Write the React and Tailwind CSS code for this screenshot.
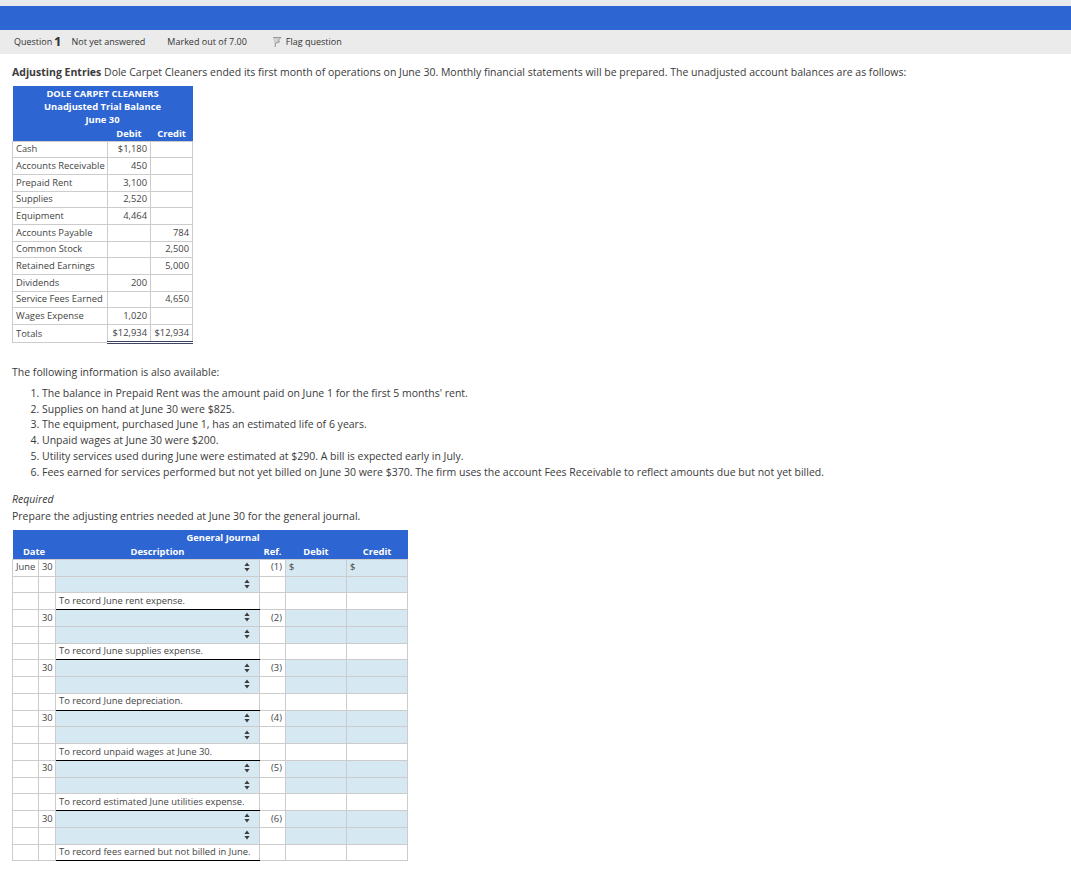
const trialRows = [
  ['Cash', '$1,180', ''],
  ['Accounts Receivable', '450', ''],
  ['Prepaid Rent', '3,100', ''],
  ['Supplies', '2,520', ''],
  ['Equipment', '4,464', ''],
  ['Accounts Payable', '', '784'],
  ['Common Stock', '', '2,500'],
  ['Retained Earnings', '', '5,000'],
  ['Dividends', '200', ''],
  ['Service Fees Earned', '', '4,650'],
  ['Wages Expense', '1,020', ''],
]

const info = [
  "The balance in Prepaid Rent was the amount paid on June 1 for the first 5 months' rent.",
  'Supplies on hand at June 30 were $825.',
  'The equipment, purchased June 1, has an estimated life of 6 years.',
  'Unpaid wages at June 30 were $200.',
  'Utility services used during June were estimated at $290. A bill is expected early in July.',
  'Fees earned for services performed but not yet billed on June 30 were $370. The firm uses the account Fees Receivable to reflect amounts due but not yet billed.',
]

const entries = [
  'To record June rent expense.',
  'To record June supplies expense.',
  'To record June depreciation.',
  'To record unpaid wages at June 30.',
  'To record estimated June utilities expense.',
  'To record fees earned but not billed in June.',
]

const cell = 'border border-[#cccccc] px-[3px] pt-0 pb-[1px] leading-none whitespace-nowrap overflow-hidden'
const input = 'bg-[#d6e8f1]'

function SelectArrows() {
  return (
    <svg width="6" height="10" viewBox="0 0 6 10" className="ml-auto mr-[6px] shrink-0">
      <path d="M3 0.5 L5.6 4 H0.4 Z M3 9.5 L5.6 6 H0.4 Z" fill="#3c3c3c" />
    </svg>
  )
}

function TrialBalance() {
  return (
    <table className="w-[180px] table-fixed border-collapse text-[9.4px] text-[#444]">
      <colgroup>
        <col className="w-[95px]" />
        <col className="w-[43px]" />
        <col className="w-[42px]" />
      </colgroup>
      <thead className="bg-[#2d65d3] text-white font-bold text-center">
        <tr className="h-[14px]"><th colSpan={3} className="p-0 pt-[2px] font-bold leading-none">DOLE CARPET CLEANERS</th></tr>
        <tr className="h-[13px]"><th colSpan={3} className="p-0 font-bold leading-none">Unadjusted Trial Balance</th></tr>
        <tr className="h-[13px]"><th colSpan={3} className="p-0 font-bold leading-none">June 30</th></tr>
        <tr className="h-[15px]">
          <th></th>
          <th className="p-0 font-bold leading-none">Debit</th>
          <th className="p-0 font-bold leading-none">Credit</th>
        </tr>
      </thead>
      <tbody>
        {trialRows.map(([name, debit, credit]) => (
          <tr key={name} className="h-[16.7px]">
            <td className={cell}>{name}</td>
            <td className={`${cell} text-right`}>{debit}</td>
            <td className={`${cell} text-right`}>{credit}</td>
          </tr>
        ))}
        <tr className="h-[18px]">
          <td className={`${cell} pt-[1px]`}>Totals</td>
          <td className={`${cell} text-right border-t-black border-b-[3px] border-b-[#3d4560] [border-bottom-style:double]`}>$12,934</td>
          <td className={`${cell} text-right border-t-black border-b-[3px] border-b-[#3d4560] [border-bottom-style:double]`}>$12,934</td>
        </tr>
      </tbody>
    </table>
  )
}

function JournalEntry({ index, text }) {
  return (
    <>
      <tr className="h-[16.75px]">
        <td className={cell}>{index === 0 ? 'June' : ''}</td>
        <td className={`${cell} text-right`}>30</td>
        <td className={`${cell} ${input}`}>
          <div className="flex items-center"><SelectArrows /></div>
        </td>
        <td className={`${cell} text-right`}>({index + 1})</td>
        <td className={`${cell} ${input}`}>{index === 0 ? '$' : ''}</td>
        <td className={`${cell} ${input}`}>{index === 0 ? '$' : ''}</td>
      </tr>
      <tr className="h-[16.75px]">
        <td className={cell}></td>
        <td className={cell}></td>
        <td className={`${cell} ${input}`}>
          <div className="flex items-center"><SelectArrows /></div>
        </td>
        <td className={cell}></td>
        <td className={`${cell} ${input}`}></td>
        <td className={`${cell} ${input}`}></td>
      </tr>
      <tr className="h-[16.75px]">
        <td className={cell}></td>
        <td className={cell}></td>
        <td className={`${cell} border-b-black`}>{text}</td>
        <td className={cell}></td>
        <td className={cell}></td>
        <td className={cell}></td>
      </tr>
    </>
  )
}

function GeneralJournal() {
  return (
    <table className="w-[395px] table-fixed border-collapse text-[9.4px] text-[#444]">
      <colgroup>
        <col className="w-[26px]" />
        <col className="w-[17px]" />
        <col className="w-[204px]" />
        <col className="w-[26px]" />
        <col className="w-[61px]" />
        <col className="w-[61px]" />
      </colgroup>
      <thead className="bg-[#2d65d3] text-white text-center">
        <tr className="h-[15px]"><th colSpan={6} className="p-0 pl-[26px] font-bold leading-none">General Journal</th></tr>
        <tr className="h-[14px]">
          <th colSpan={2} className="p-0 pb-[1px] font-bold leading-none">Date</th>
          <th className="p-0 pb-[1px] font-bold leading-none">Description</th>
          <th className="p-0 pb-[1px] font-bold leading-none">Ref.</th>
          <th className="p-0 pb-[1px] font-bold leading-none">Debit</th>
          <th className="p-0 pb-[1px] font-bold leading-none">Credit</th>
        </tr>
      </thead>
      <tbody>
        {entries.map((text, i) => (
          <JournalEntry key={text} index={i} text={text} />
        ))}
      </tbody>
    </table>
  )
}

export default function App() {
  return (
    <div className="min-h-[884px] bg-white text-[#3a3a3a] font-['Open_Sans',sans-serif]">
      <div className="h-[6px] bg-[#e9eaec]" />
      <div className="h-[24px] bg-[#2d65d3]" />

      {/* Question info */}
      <div className="flex h-[24px] items-center bg-[#ebebeb] pl-[14px] text-[9px] text-[#333]">
        <span className="w-[36px] whitespace-nowrap">Question</span>
        <span className="ml-[4px] text-[13px] font-bold">1</span>
        <span className="ml-[10px]">Not yet answered</span>
        <span className="ml-[22px]">Marked out of 7.00</span>
        <svg width="10" height="12" viewBox="0 0 10 12" className="ml-[25px]">
          <path d="M1 1.5 H9 L6.5 4 L7.5 6 L3.8 7 L3 11" fill="#cfcfcf" stroke="#888" strokeWidth="0.8" />
        </svg>
        <span className="ml-[4px]">Flag question</span>
      </div>

      <div className="px-[12px]">
        <p className="mt-[10px] text-[10.5px] leading-[16px]">
          <b>Adjusting Entries</b> Dole Carpet Cleaners ended its first month of operations on June 30. Monthly financial statements will be prepared. The unadjusted account balances are as follows:
        </p>

        <div className="mt-[6px]">
          <TrialBalance />
        </div>

        <p className="mt-[20px] text-[10.5px] leading-[16px]">The following information is also available:</p>

        <ol className="mt-[6px] list-decimal pl-[30px] text-[10.5px] leading-[15.7px]">
          {info.map((line) => (
            <li key={line}>{line}</li>
          ))}
        </ol>

        <p className="mt-[11px] text-[10.5px] italic leading-[16px]">Required</p>
        <p className="mt-[1px] text-[10.5px] leading-[16px]">Prepare the adjusting entries needed at June 30 for the general journal.</p>

        <div className="mt-[6px]">
          <GeneralJournal />
        </div>
      </div>
    </div>
  )
}
